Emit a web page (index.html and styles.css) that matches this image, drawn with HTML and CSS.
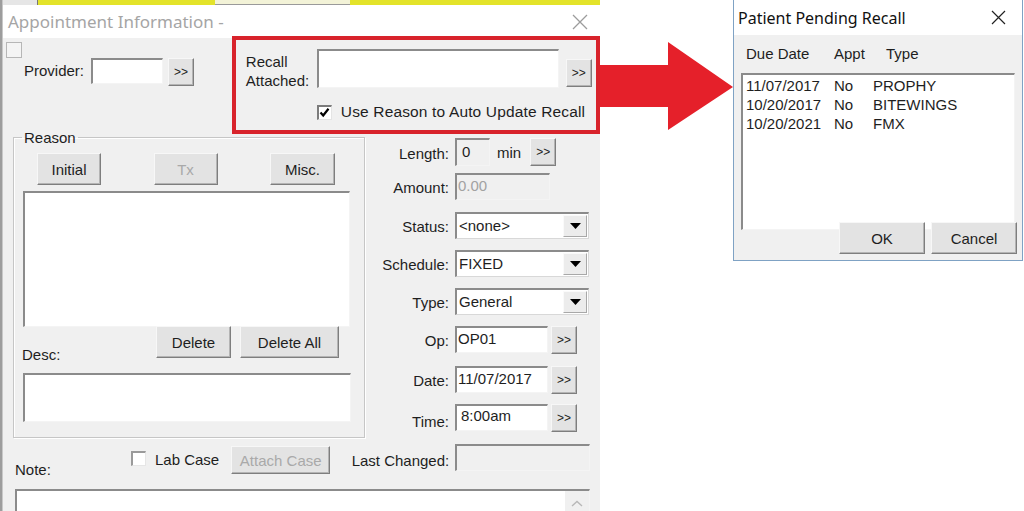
FILE: index.html
```html
<!DOCTYPE html>
<html>
<head>
<meta charset="utf-8">
<link rel="stylesheet" href="styles.css">
</head>
<body>
<div class="topstrip"><span class="seg seg-a"></span><span class="seg seg-b"></span><span class="seg seg-c"></span><span class="seg seg-d"></span></div>
<div class="leftstrip"></div>

<section class="win appt">
  <header class="a-title">
    <span class="a-title-text">Appointment Information -</span>
    <svg class="close-x" width="16" height="16" viewBox="0 0 16 16"><path d="M1 1 L15 15 M15 1 L1 15" stroke="#9c9c9c" stroke-width="1.3" fill="none"/></svg>
  </header>
  <div class="a-body">
    <div class="top-row">
      <div class="prov-area">
        <div class="tiny-box"></div>
        <div class="prov-row">
          <span class="prov-lbl">Provider:</span>
          <div class="field prov-field"></div>
          <button class="btn sm prov-btn">&gt;&gt;</button>
        </div>
      </div>
      <div class="redbox">
        <div class="recall-row">
          <div class="recall-lbl">Recall<br>Attached:</div>
          <div class="field recall-field"></div>
          <button class="btn sm recall-btn">&gt;&gt;</button>
        </div>
        <div class="chk-row">
          <span class="chk"><svg width="11" height="11" viewBox="0 0 11 11"><path d="M1.5 5.5 L4.2 8.5 L9.5 1.8" stroke="#000" stroke-width="2.2" fill="none"/></svg></span>
          <span class="use-reason">Use Reason to Auto Update Recall</span>
        </div>
      </div>
    </div>

    <div class="mid">
      <fieldset class="reason">
        <legend>Reason</legend>
        <div class="reason-btns">
          <button class="btn rb">Initial</button>
          <button class="btn rb disabled">Tx</button>
          <button class="btn rb misc">Misc.</button>
        </div>
        <div class="field listbox"></div>
        <div class="del-row">
          <span class="desc-lbl">Desc:</span>
          <div class="del-btns">
            <button class="btn del">Delete</button>
            <button class="btn delall">Delete All</button>
          </div>
        </div>
        <div class="field descbox"></div>
      </fieldset>

      <div class="fields">
        <div class="frow first">
          <span class="flbl">Length:</span>
          <div class="field dis len">0</div>
          <span class="min">min</span>
          <button class="btn sm len-btn">&gt;&gt;</button>
        </div>
        <div class="frow mt7">
          <span class="flbl">Amount:</span>
          <div class="field dis amt">0.00</div>
        </div>
        <div class="frow mt12">
          <span class="flbl">Status:</span>
          <div class="field combo"><span class="combo-val">&lt;none&gt;</span><span class="drop"><svg width="11" height="6" viewBox="0 0 11 6"><path d="M0 0 H11 L5.5 6 Z" fill="#000"/></svg></span></div>
        </div>
        <div class="frow mt11">
          <span class="flbl">Schedule:</span>
          <div class="field combo"><span class="combo-val">FIXED</span><span class="drop"><svg width="11" height="6" viewBox="0 0 11 6"><path d="M0 0 H11 L5.5 6 Z" fill="#000"/></svg></span></div>
        </div>
        <div class="frow mt11">
          <span class="flbl">Type:</span>
          <div class="field combo"><span class="combo-val">General</span><span class="drop"><svg width="11" height="6" viewBox="0 0 11 6"><path d="M0 0 H11 L5.5 6 Z" fill="#000"/></svg></span></div>
        </div>
        <div class="frow mt11">
          <span class="flbl">Op:</span>
          <div class="field txt">OP01</div>
          <button class="btn sm pick">&gt;&gt;</button>
        </div>
        <div class="frow mt13">
          <span class="flbl">Date:</span>
          <div class="field txt">11/07/2017</div>
          <button class="btn sm pick">&gt;&gt;</button>
        </div>
        <div class="frow mt11">
          <span class="flbl low">Time:</span>
          <div class="field txt time">8:00am</div>
          <button class="btn sm pick">&gt;&gt;</button>
        </div>
      </div>
    </div>

    <div class="bottom-row">
      <span class="note-lbl">Note:</span>
      <span class="chk lab"></span>
      <span class="lab-lbl">Lab Case</span>
      <button class="btn attach disabled">Attach Case</button>
      <span class="lc-lbl">Last Changed:</span>
      <div class="field dis lc-field"></div>
    </div>

    <div class="field note">
      <div class="scroll"><svg width="12" height="7" viewBox="0 0 12 7"><path d="M1 6 L6 1.5 L11 6" stroke="#b8b8b8" stroke-width="1.4" fill="none"/></svg></div>
    </div>
  </div>
</section>

<svg class="arrow" width="135" height="92" viewBox="0 0 135 92"><polygon points="0,25 68,25 68,2 133,47 68,90 68,67 0,67" fill="#e5202a"/></svg>

<section class="win recall">
  <header class="r-title">
    <span class="r-title-text">Patient Pending Recall</span>
    <svg width="15" height="15" viewBox="0 0 15 15"><path d="M1 1 L14 14 M14 1 L1 14" stroke="#222" stroke-width="1.2" fill="none"/></svg>
  </header>
  <div class="r-head">
    <span class="c1">Due Date</span><span class="c2h">Appt</span><span>Type</span>
  </div>
  <div class="field r-list">
    <div class="r-row"><span class="c1">11/07/2017</span><span class="c2">No</span><span>PROPHY</span></div>
    <div class="r-row"><span class="c1">10/20/2017</span><span class="c2">No</span><span>BITEWINGS</span></div>
    <div class="r-row"><span class="c1">10/20/2021</span><span class="c2">No</span><span>FMX</span></div>
  </div>
  <div class="r-btns">
    <button class="btn rbtn">OK</button>
    <button class="btn rbtn">Cancel</button>
  </div>
</section>
</body>
</html>
```

FILE: styles.css
```css
* { box-sizing: border-box; }
html, body { margin: 0; padding: 0; }
body {
  width: 1024px;
  height: 511px;
  overflow: hidden;
  position: relative;
  background: #ffffff;
  font-family: "Liberation Sans", Arial, sans-serif;
  font-size: 15px;
  color: #1e1e1e;
}

/* background application fragments */
.topstrip { position: absolute; left: 0; top: 0; width: 600px; height: 5px; display: flex; }
.seg { display: block; height: 5px; }
.seg-a { width: 38px; background: #e6e6e6; border-right: 1px solid #777; }
.seg-b { width: 177px; background: #e3e32a; }
.seg-c { width: 135px; background: #f3f3d8; border-bottom: 1px solid #9a9a9a; }
.seg-d { flex: 1; background: #e3e32a; }
.leftstrip { position: absolute; left: 0; top: 0; width: 3px; height: 511px; background: #9d9d9d; border-right: 1px solid #c8c8c8; }

/* generic controls */
.btn {
  font-family: "Liberation Sans", Arial, sans-serif;
  font-size: 15px;
  color: #1e1e1e;
  padding: 0;
  margin: 0;
  background: #e3e3e3;
  border: 1px solid;
  border-color: #f7f7f7 #7e7e7e #7e7e7e #f7f7f7;
  box-shadow: inset -1px -1px 0 #b4b4b4;
  display: flex;
  align-items: center;
  justify-content: center;
}
.btn.disabled { color: #a9a9a9; }
.btn.sm { width: 26px; height: 28px; font-size: 12px; }
.field {
  background: #ffffff;
  border-style: solid;
  border-width: 2px 1px 1px 2px;
  border-color: #8b8b8b #f4f4f4 #f4f4f4 #8b8b8b;
}
.field.dis { background: #f0f0f0; }
.chk {
  width: 15px;
  height: 15px;
  background: #ffffff;
  border-style: solid;
  border-width: 2px 1px 1px 2px;
  border-color: #7c7c7c #e4e4e4 #e4e4e4 #7c7c7c;
  display: flex;
  align-items: center;
  justify-content: center;
  flex: none;
}

/* appointment window */
.appt { position: absolute; left: 3px; top: 5px; width: 597px; height: 506px; background: #f0f0f0; }
.a-title {
  height: 33px;
  background: #ffffff;
  display: flex;
  align-items: center;
  justify-content: space-between;
  padding: 0 12px 0 5px;
}
.a-title-text { font-family: "Noto Sans", "Open Sans", sans-serif; font-size: 17px; color: #a5a5a5; }

.top-row { display: flex; }
.prov-area { width: 230px; }
.tiny-box { width: 16px; height: 16px; margin: 4px 0 0 3px; border: 1px solid #b6b6b6; background: #f4f4f4; }
.prov-row { display: flex; align-items: flex-start; padding-left: 21px; }
.prov-lbl { width: 67px; line-height: 26px; }
.prov-field { width: 72px; height: 26px; }
.prov-btn { margin-left: 5px; }

.redbox { width: 370px; height: 98px; margin-top: -2px; border: 4px solid #d8232b; padding: 9px 0 0 10px; }
.recall-row { display: flex; align-items: flex-end; height: 39px; }
.recall-lbl { width: 71px; line-height: 19px; align-self: flex-start; margin-top: 3px; }
.recall-field { width: 242px; height: 39px; }
.recall-btn { margin-left: 7px; margin-bottom: 1px; }
.chk-row { display: flex; align-items: center; gap: 9px; margin-top: 15px; padding-left: 71px; }
.use-reason { font-size: 15.5px; letter-spacing: 0.15px; }

.mid { display: flex; margin-top: -5px; }
.reason {
  margin: 0 0 0 10px;
  padding: 0;
  width: 352px;
  min-width: 0;
  border: 1px solid #c6c6c6;
  box-shadow: 1px 1px 0 #ffffff, inset 1px 1px 0 #ffffff;
}
.reason legend { margin-left: 8px; padding: 0 2px; line-height: 17px; font-size: 15px; }
.reason-btns { display: flex; justify-content: space-between; padding: 0 29px 0 23px; margin-top: 7px; }
.rb { width: 64px; height: 32px; }
.rb.misc { width: 65px; }
.listbox { margin: 6px 0 0 9px; width: 327px; height: 136px; }
.del-row { display: flex; align-items: flex-end; height: 32px; margin-top: -1px; }
.desc-lbl { padding-left: 8px; line-height: 17px; margin-bottom: -5px; }
.del-btns { display: flex; gap: 9px; margin-left: auto; margin-right: 25px; }
.del { width: 75px; height: 32px; }
.delall { width: 99px; height: 32px; }
.descbox { margin: 15px 0 15px 9px; width: 328px; height: 49px; }

.fields { flex: 1; padding-top: 9px; display: flex; flex-direction: column; }
.frow { display: flex; align-items: center; height: 27px; }
.frow.first { height: 28px; }
.mt7 { margin-top: 7px; }
.mt11 { margin-top: 11px; }
.mt12 { margin-top: 12px; }
.mt13 { margin-top: 13px; }
.flbl { width: 84px; margin-right: 6px; text-align: right; padding-top: 2px; }
.flbl.low { padding-top: 8px; }
.len { width: 35px; height: 28px; padding-left: 5px; line-height: 24px; }
.min { margin-left: 7px; }
.len-btn { margin-left: 9px; width: 25px; height: 27px; }
.amt { width: 95px; height: 27px; color: #a2a2a2; padding-left: 1px; line-height: 22px; }
.combo { width: 134px; height: 27px; display: flex; align-items: stretch; border-color: #8b8b8b #d8d8d8 #d8d8d8 #8b8b8b; }
.combo-val { flex: 1; padding-left: 2px; line-height: 23px; }
.drop {
  width: 24px;
  margin: 1px 1px 1px 0;
  background: #ececec;
  border: 1px solid;
  border-color: #fafafa #a8a8a8 #a8a8a8 #fafafa;
  display: flex;
  align-items: center;
  justify-content: center;
}
.txt { width: 93px; height: 27px; padding-left: 1px; line-height: 22px; }
.txt.time { padding-left: 4px; line-height: 20px; }
.pick { margin-left: 3px; }

.bottom-row { display: flex; align-items: center; height: 30px; margin-top: 6px; }
.note-lbl { width: 128px; padding-left: 12px; line-height: 17px; align-self: flex-end; margin-bottom: -4px; }
.chk.lab { border-color: #9a9a9a #e6e6e6 #e6e6e6 #9a9a9a; margin-bottom: 1px; }
.lab-lbl { margin-left: 9px; }
.attach { width: 99px; height: 28px; margin-left: 12px; margin-top: 2px; }
.lc-lbl { width: 100px; margin-left: 19px; text-align: right; padding-top: 2px; }
.lc-field { width: 135px; height: 27px; margin-left: 6px; margin-top: -3px; }

.note { margin: 15px 0 0 12px; width: 575px; height: 40px; display: flex; justify-content: flex-end; }
.scroll { width: 24px; background: #f0f0f0; display: flex; justify-content: center; padding-top: 9px; }

/* annotation arrow */
.arrow { position: absolute; left: 600px; top: 40px; }

/* recall window */
.recall {
  position: absolute;
  left: 733px;
  top: 0;
  width: 290px;
  height: 261px;
  background: #f0f0f0;
  border: 1px solid #7fa2c4;
  border-top: none;
}
.r-title {
  height: 35px;
  background: #ffffff;
  display: flex;
  align-items: center;
  justify-content: space-between;
  padding: 0 16px 0 4px;
}
.r-title-text { font-family: "Noto Sans", "Open Sans", sans-serif; font-size: 16px; color: #111; }
.r-head { display: flex; padding: 10px 0 0 12px; line-height: 18px; }
.c1 { width: 88px; }
.c2h { width: 52px; }
.c2 { width: 39px; }
.r-list { margin: 10px 0 0 7px; width: 274px; height: 157px; padding: 1px 0 0 3px; }
.r-row { display: flex; line-height: 19px; }
.r-btns { display: flex; justify-content: flex-end; gap: 6px; margin-top: -8px; padding-right: 5px; }
.rbtn { width: 86px; height: 32px; }
```
